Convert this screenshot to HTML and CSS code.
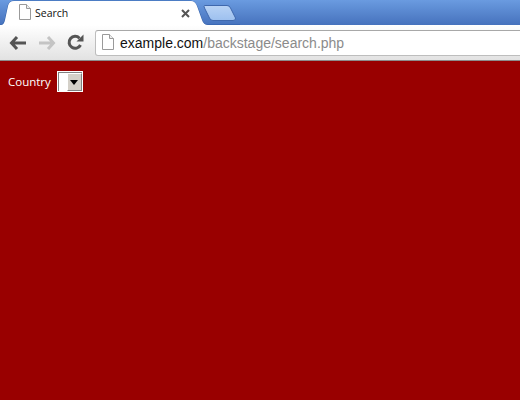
FILE: index.html
```html
<!DOCTYPE html>
<html lang="en">
<head>
<meta charset="UTF-8">
<title>Search</title>
<link rel="stylesheet" href="styles.css">
</head>
<body>
<div class="browser">
  <div class="tabstrip">
    <svg class="tabshape" width="240" height="25" viewBox="0 0 240 25">
      <defs>
        <linearGradient id="newtab" x1="0" y1="0" x2="0" y2="1">
          <stop offset="0" stop-color="#b9d3f5"/>
          <stop offset="1" stop-color="#9dc0ef"/>
        </linearGradient>
      </defs>
      <path d="M204.500 5.500 H227 Q229.500 5.500 230.500 8 L235.500 18 Q236 20.500 233 20.500 H213 Q210.500 20.500 209.500 18 L204.500 8 Q203.500 5.500 204.500 5.500 Z" fill="url(#newtab)" stroke="#3f68ad"/>
      <path d="M0 25 H1 Q4 25 5 20 L8 6 Q9 1 14 1 H191 Q195 1 197 6 L202 20 Q203.500 25 208 25 H240" fill="none" stroke="#2f5ea8"/>
      <path d="M1 25 Q4 25 5 20 L8 6 Q9 1 14 1 H191 Q195 1 197 6 L202 20 Q203.500 25 208 25 Z" fill="#ffffff"/>
    </svg>
    <div class="tab">
      <svg class="page-icon" width="14" height="17" viewBox="0 0 14 17">
        <path d="M1.500 .5 H8.500 L12.500 4.500 V15.500 H1.500 Z" fill="#fff" stroke="#9a9a9a"/>
        <path d="M8.500 .5 V4.500 H12.500" fill="#eee" stroke="#9a9a9a"/>
      </svg>
      <span class="tab-title">Search</span>
      <svg class="tab-close" width="9" height="9" viewBox="0 0 9 9">
        <path d="M1 1 L8 8 M8 1 L1 8" stroke="#555" stroke-width="2"/>
      </svg>
    </div>
  </div>
  <div class="toolbar">
    <svg class="nav-icon" width="18" height="16" viewBox="0 0 18 16">
      <path d="M8 2 L2.500 8 L8 14 M3 8 H17" fill="none" stroke="#555" stroke-width="3"/>
    </svg>
    <svg class="nav-icon" width="18" height="16" viewBox="0 0 18 16">
      <path d="M10 2 L15.500 8 L10 14 M15 8 H1" fill="none" stroke="#c4c4c4" stroke-width="3"/>
    </svg>
    <svg class="nav-icon reload" width="17" height="17" viewBox="0 0 17 17">
      <path d="M13.500 11 A6 6 0 1 1 12.500 4.200" fill="none" stroke="#555" stroke-width="3"/>
      <path d="M9.500 7.500 H16.500 V.5 Z" fill="#555"/>
    </svg>
    <div class="omnibox">
      <svg class="page-icon" width="14" height="17" viewBox="0 0 14 17">
        <path d="M1.500 .5 H8.500 L12.500 4.500 V15.500 H1.500 Z" fill="#fff" stroke="#9a9a9a"/>
        <path d="M8.500 .5 V4.500 H12.500" fill="#eee" stroke="#9a9a9a"/>
      </svg>
      <span class="url"><span class="host">example.com</span>/backstage/search.php</span>
    </div>
  </div>
</div>
<form class="search-form">
  <label class="field-label">Country</label>
  <div class="select-box">
    <div class="select-value"></div>
    <div class="select-button"><span class="select-arrow"></span></div>
  </div>
</form>
</body>
</html>
```

FILE: styles.css
```css
html, body {
  height: 100%;
}

body {
  margin: 0;
  background-color: #990000;
  font-family: "Open Sans", "Liberation Sans", sans-serif;
  overflow: hidden;
}

.browser {
  height: 61px;
  box-sizing: border-box;
  border-bottom: 1px solid #8c8c8c;
}

.tabstrip {
  position: relative;
  height: 25px;
  background: linear-gradient(#6a9be0, #4672bd);
}

.tabshape {
  position: absolute;
  left: 0;
  top: 0;
}

.tab {
  position: relative;
  display: flex;
  align-items: center;
  width: 190px;
  height: 25px;
  padding-left: 18px;
  box-sizing: border-box;
}

.tab-title {
  margin-left: 3px;
  font-family: "Open Sans", sans-serif;
  font-size: 10.500px;
  color: #111;
}

.tab-close {
  margin-left: auto;
  margin-top: 1px;
}

.toolbar {
  display: flex;
  align-items: center;
  height: 35px;
  padding-left: 9px;
  background: linear-gradient(#ffffff, #e2e2e2);
}

.nav-icon {
  margin-right: 11px;
  flex: none;
}

.reload {
  margin-right: 11px;
}

.omnibox {
  display: flex;
  align-items: center;
  flex: 1;
  height: 24px;
  margin-right: -10px;
  padding-left: 5px;
  background-color: #fff;
  border: 1px solid #bdbdbd;
  border-top-color: #a8a8a8;
  border-radius: 3px;
}

.url {
  margin-left: 5px;
  font-family: "Liberation Sans", sans-serif;
  font-size: 14px;
  color: #8b8b8b;
}

.host {
  color: #111;
}

.search-form {
  display: flex;
  align-items: center;
  padding: 10px 0 0 8px;
}

.field-label {
  font-family: "Open Sans", sans-serif;
  font-size: 11.500px;
  color: #fff;
}

.select-box {
  display: flex;
  width: 26px;
  height: 21px;
  margin-left: 6px;
  box-sizing: border-box;
  border: 1px solid #fff;
  background-color: #fff;
  box-shadow: inset 1px 1px 0 #808080;
}

.select-value {
  width: 8px;
  margin: 1px 0 0 1px;
  background-color: #fff;
}

.select-button {
  display: flex;
  align-items: center;
  justify-content: center;
  flex: 1;
  margin: 1px 0 0;
  background-color: #d4d0c8;
  border-top: 1px solid #fff;
  border-left: 1px solid #fff;
  border-right: 1px solid #808080;
  border-bottom: 1px solid #808080;
}

.select-arrow {
  width: 0;
  height: 0;
  border-left: 4px solid transparent;
  border-right: 4px solid transparent;
  border-top: 5px solid #000;
}
```
